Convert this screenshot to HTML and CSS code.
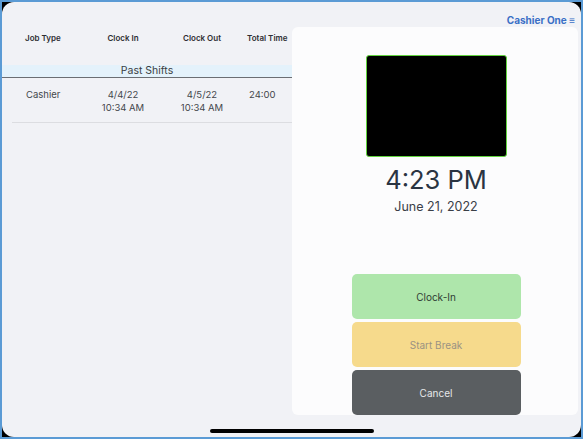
FILE: index.html
```html
<!DOCTYPE html>
<html lang="en">
<head>
    <meta charset="UTF-8">
    <title>Time Clock</title>
    <link rel="stylesheet" href="styles.css">
</head>
<body>
    <div class="device">
        <div class="screen">
            <!-- shift history -->
            <div class="shifts">
                <div class="shift-head">
                    <div class="col-job">Job Type</div>
                    <div class="col-mid">Clock In</div>
                    <div class="col-mid">Clock Out</div>
                    <div class="col-total">Total Time</div>
                </div>
                <div class="section-title">Past Shifts</div>
                <div class="shift-row">
                    <div class="col-job">Cashier</div>
                    <div class="col-mid">4/4/22<br>10:34 AM</div>
                    <div class="col-mid">4/5/22<br>10:34 AM</div>
                    <div class="col-total">24:00</div>
                </div>
            </div>

            <!-- clock panel -->
            <div class="side">
                <div class="user-menu">Cashier One <span class="menu-icon">&#8801;</span></div>
                <div class="panel">
                    <div class="camera"></div>
                    <div class="time">4:23 PM</div>
                    <div class="date">June 21, 2022</div>
                    <div class="actions">
                        <button class="btn btn-in">Clock-In</button>
                        <button class="btn btn-break">Start Break</button>
                        <button class="btn btn-cancel">Cancel</button>
                    </div>
                </div>
            </div>

            <div class="home-bar"><span></span></div>
        </div>
    </div>
</body>
</html>
```

FILE: styles.css
```css
/* base */
* {
    box-sizing: border-box;
    margin: 0;
    padding: 0;
}

body {
    width: 583px;
    height: 439px;
    overflow: hidden;
    font-family: Inter, "Liberation Sans", Arial, sans-serif;
    background: #5b9bd5;
}

/* device frame */
.device {
    width: 583px;
    height: 439px;
    border: 2px solid #5b9bd5;
    border-right-width: 2px;
    background: #000;
}

.screen {
    height: 100%;
    background: #f1f2f6;
    border-radius: 12px;
    overflow: hidden;
    display: grid;
    grid-template-columns: 290px 1fr;
    grid-template-rows: 1fr 22px;
}

/* shift table */
.shifts {
    overflow: hidden;
    color: #333;
}

.shift-head {
    display: grid;
    grid-template-columns: 83px 76px 82px 1fr;
    padding-top: 30px;
    margin-bottom: 21px;
    font-size: 8px;
    font-weight: 600;
    line-height: 12px;
    color: #2e2e33;
    white-space: nowrap;
}

.shift-head .col-job {
    padding-left: 23px;
}

.shift-head .col-total {
    padding-left: 4px;
}

.col-mid {
    text-align: center;
}

.section-title {
    height: 13px;
    line-height: 12px;
    background: #e4f2fb;
    border-bottom: 1px solid #6b6e73;
    text-align: center;
    font-size: 10.5px;
    color: #3b3e44;
}

.shift-row {
    display: grid;
    grid-template-columns: 73px 76px 82px 1fr;
    margin-left: 10px;
    padding: 11px 0 8px;
    border-bottom: 1px solid #dcdde1;
    font-size: 9.5px;
    line-height: 12.5px;
    color: #44474c;
}

.shift-row .col-job {
    padding-left: 14px;
}

.shift-row .col-total {
    padding-left: 6px;
}

/* right side */
.side {
    display: flex;
    flex-direction: column;
    padding-right: 3px;
}

.user-menu {
    padding: 11px 3px 0 0;
    height: 25px;
    line-height: 14px;
    text-align: right;
    font-size: 10px;
    font-weight: 700;
    color: #3a6fc6;
}

.menu-icon {
    font-weight: 400;
}

.panel {
    flex: 1;
    display: flex;
    flex-direction: column;
    align-items: center;
    padding-left: 2px;
    background: #fcfcfd;
    border-radius: 6px;
}

.camera {
    margin-top: 28px;
    width: 141px;
    height: 102px;
    background: #000;
    border: 1.5px solid #62d43f;
    border-radius: 3px;
}

.time {
    margin-top: 8px;
    font-size: 25.5px;
    line-height: 30px;
    color: #2a3442;
}

.date {
    margin-top: 4px;
    font-size: 12.5px;
    line-height: 16px;
    color: #3a3f47;
}

.actions {
    margin-top: auto;
    display: flex;
    flex-direction: column;
    gap: 3px;
}

.btn {
    width: 169px;
    height: 45px;
    border: none;
    border-radius: 5px;
    font-family: inherit;
    font-size: 10px;
}

.btn-in {
    background: #aee6ab;
    color: #2f3d34;
}

.btn-break {
    background: #f6da8c;
    color: #9a9283;
}

.btn-cancel {
    background: #5a5e61;
    color: #e6e7e8;
}

/* home indicator */
.home-bar {
    grid-column: 1 / -1;
    display: flex;
    justify-content: center;
    padding-top: 14px;
}

.home-bar span {
    width: 164px;
    height: 4px;
    border-radius: 2px;
    background: #000;
}
```
